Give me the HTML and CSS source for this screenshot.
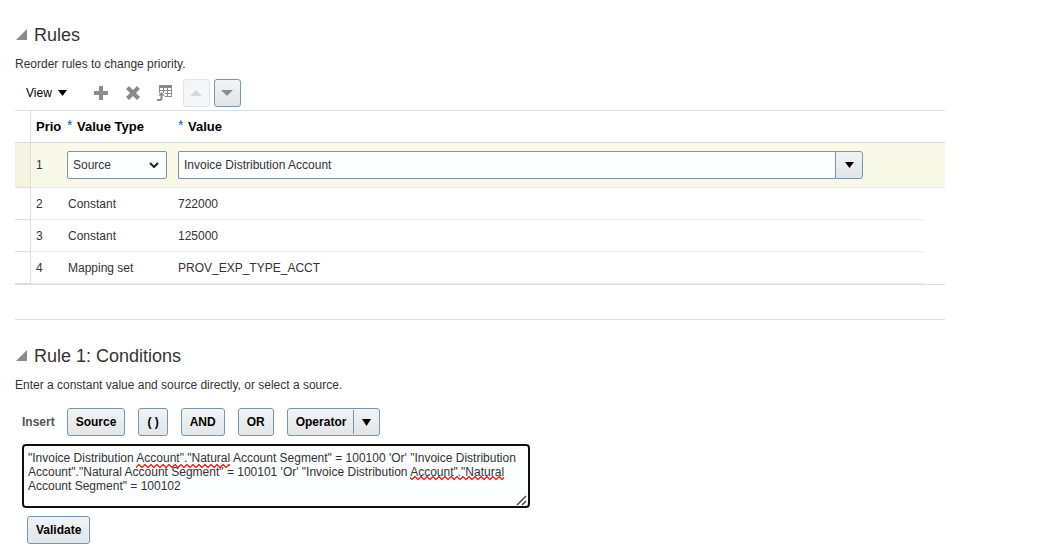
FILE: index.html
```html
<!DOCTYPE html>
<html lang="en">
<head>
    <meta charset="UTF-8">
    <meta name="viewport" content="width=device-width, initial-scale=1.0">
    <title>Account Rule</title>
    <link rel="stylesheet" href="styles.css">
</head>
<body>
    <section class="panel rules">
        <h2 class="panel-title">
            <svg class="disclosure" width="12" height="12" viewBox="0 0 12 12"><path d="M12 0V11H1Z"/></svg>
            Rules
        </h2>
        <p class="hint">Reorder rules to change priority.</p>
        <div class="toolbar">
            <button type="button" class="view-menu">View
                <svg width="9" height="6" viewBox="0 0 9 6"><path d="M0 0H9L4.500 6Z"/></svg>
            </button>
            <button type="button" class="tool" aria-label="Add">
                <svg width="14" height="14" viewBox="0 0 14 14"><path d="M5 0H9V5H14V9H9V14H5V9H0V5H5Z"/></svg>
            </button>
            <button type="button" class="tool" aria-label="Delete">
                <svg width="14" height="14" viewBox="0 0 14 14"><path d="M3 0L7 4L11 0L14 3L10 7L14 11L11 14L7 10L3 14L0 11L4 7L0 3Z"/></svg>
            </button>
            <button type="button" class="tool" aria-label="Detach">
                <svg width="16" height="16" viewBox="0 0 16 16">
                    <path d="M2 0H15V12H8V11H14V9H11V11H10V9H8V8H10V6H7V8H6V6H3V8H2ZM3 3V5H6V3ZM7 3V5H10V3ZM11 3V5H14V3ZM11 6V8H14V6Z" fill-rule="evenodd"/>
                    <path d="M4.500 7L8 10.500H5.500V13Q5.500 16 3 16H0V14H2.500Q3.500 14 3.500 13V10.500H1Z"/>
                </svg>
            </button>
            <button type="button" class="btn move" aria-label="Move up" disabled>
                <svg width="12" height="6" viewBox="0 0 12 6"><path d="M0 6H12L6 0Z"/></svg>
            </button>
            <button type="button" class="btn move" aria-label="Move down">
                <svg width="12" height="6" viewBox="0 0 12 6"><path d="M0 0H12L6 6Z"/></svg>
            </button>
        </div>
        <table class="rule-table">
            <colgroup>
                <col class="col-handle">
                <col class="col-priority">
                <col class="col-type">
                <col>
                <col class="col-scroll">
            </colgroup>
            <thead>
                <tr>
                    <th class="handle"></th>
                    <th class="priority">Prio</th>
                    <th><span class="required">*</span>Value Type</th>
                    <th><span class="required">*</span>Value</th>
                    <th></th>
                </tr>
            </thead>
            <tbody>
                <tr class="selected">
                    <td class="handle"></td>
                    <td class="priority">1</td>
                    <td>
                        <div class="type-box">
                            <select class="type-select" aria-label="Value Type">
                                <option>Source</option>
                                <option>Constant</option>
                                <option>Mapping set</option>
                            </select>
                            <svg class="chevron" width="10" height="6" viewBox="0 0 10 6"><path d="M1 1L5 5L9 1"/></svg>
                        </div>
                    </td>
                    <td>
                        <div class="combo">
                            <input type="text" aria-label="Value" value="Invoice Distribution Account">
                            <button type="button" aria-label="Show values">
                                <svg width="9" height="6" viewBox="0 0 9 6"><path d="M0 0H9L4.500 6Z"/></svg>
                            </button>
                        </div>
                    </td>
                    <td class="scroll"></td>
                </tr>
                <tr>
                    <td class="handle"></td>
                    <td class="priority">2</td>
                    <td class="type">Constant</td>
                    <td>722000</td>
                    <td class="scroll"></td>
                </tr>
                <tr>
                    <td class="handle"></td>
                    <td class="priority">3</td>
                    <td class="type">Constant</td>
                    <td>125000</td>
                    <td class="scroll"></td>
                </tr>
                <tr>
                    <td class="handle"></td>
                    <td class="priority">4</td>
                    <td class="type">Mapping set</td>
                    <td>PROV_EXP_TYPE_ACCT</td>
                    <td class="scroll"></td>
                </tr>
            </tbody>
        </table>
    </section>

    <section class="panel conditions">
        <h2 class="panel-title">
            <svg class="disclosure" width="12" height="12" viewBox="0 0 12 12"><path d="M12 0V11H1Z"/></svg>
            Rule 1: Conditions
        </h2>
        <p class="hint">Enter a constant value and source directly, or select a source.</p>
        <div class="insert-bar">
            <span class="insert-label">Insert</span>
            <button type="button" class="btn">Source</button>
            <button type="button" class="btn">( )</button>
            <button type="button" class="btn">AND</button>
            <button type="button" class="btn">OR</button>
            <button type="button" class="btn split">
                <span class="split-text">Operator</span>
                <svg width="9" height="7" viewBox="0 0 9 7"><path d="M0 0H9L4.500 7Z"/></svg>
            </button>
        </div>
        <div class="editor">
            <textarea aria-label="Condition" spellcheck="true">"Invoice Distribution Account"."Natural Account Segment" = 100100 'Or' "Invoice Distribution Account"."Natural Account Segment" = 100101 'Or' "Invoice Distribution Account"."Natural Account Segment" = 100102</textarea>
            <!-- spelling marks and resize grip -->
            <svg class="marks" width="508" height="64" viewBox="0 0 508 64">
                <defs>
                    <pattern id="wave" y="20" width="6" height="4" patternUnits="userSpaceOnUse">
                        <path class="wave" d="M-1 2.500L0 3.500L3 0.500L6 3.500L7 2.500"/>
                    </pattern>
                </defs>
                <rect x="114" y="20" width="94" height="4" fill="url(#wave)"/>
                <rect x="388" y="32" width="94" height="4" fill="url(#wave)"/>
                <path class="grip" d="M495 61L504 52M500 61L504 57"/>
            </svg>
        </div>
        <button type="button" class="btn validate">Validate</button>
    </section>
</body>
</html>
```
FILE: styles.css
```css
body {
    margin: 0;
    padding: 24px 108px 14px 15px;
    background: #fff;
    color: #333;
    font-family: "Liberation Sans", Arial, sans-serif;
    font-size: 12px;
    line-height: 14px;
}
button, input, select, textarea {
    font: inherit;
    color: inherit;
    box-sizing: border-box;
    margin: 0;
}
button {
    cursor: pointer;
}
svg {
    display: block;
    flex: none;
}
.panel-title {
    display: flex;
    align-items: center;
    gap: 7px;
    margin: 0;
    font-size: 18px;
    font-weight: normal;
    line-height: 22px;
}
.disclosure {
    fill: #878c91;
}
.hint {
    margin: 11px 0 8px;
}

/* buttons */
.btn {
    display: flex;
    align-items: center;
    justify-content: center;
    height: 28px;
    padding: 0 8px;
    border: 1px solid #7a94aa;
    border-radius: 3px;
    background: linear-gradient(#f1f3f4, #e2e6e9);
    color: #000;
    font-weight: bold;
}
.move {
    width: 27px;
    padding: 0;
    fill: #878c91;
}
.move:disabled {
    border-color: #dfe4e7;
    background: #f4f6f7;
    fill: #d5d8da;
}

/* toolbar */
.toolbar {
    display: flex;
    align-items: center;
    gap: 4px;
    padding-left: 11px;
}
.view-menu {
    display: flex;
    align-items: center;
    gap: 6px;
    margin-right: 16px;
    padding: 0;
    border: none;
    background: none;
    color: #000;
}
.tool {
    display: flex;
    align-items: center;
    justify-content: center;
    width: 28px;
    height: 28px;
    padding: 0;
    border: none;
    background: none;
    fill: #878c91;
}

/* rules table */
.rule-table {
    width: 100%;
    margin-top: 3px;
    border-top: 1px solid #d6dfe6;
    border-bottom: 1px solid #d6dfe6;
    border-collapse: separate;
    border-spacing: 0;
    table-layout: fixed;
}
.col-handle {
    width: 16px;
}
.col-priority {
    width: 31px;
}
.col-type {
    width: 111px;
}
.col-scroll {
    width: 21px;
}
.rule-table th,
.rule-table td {
    box-sizing: border-box;
    height: 32px;
    padding: 0 5px;
    border-bottom: 1px solid #ebedee;
    text-align: left;
    white-space: nowrap;
}
.rule-table th {
    border-color: #d6dfe6;
    color: #000;
    font-size: 13px;
}
.rule-table .type {
    padding-left: 6px;
}
.rule-table .priority {
    padding-right: 0;
}
.rule-table .handle {
    padding: 0;
    border-right: 1px solid #d6dfe6;
    border-bottom-color: #d6dfe6;
}
.rule-table .scroll {
    padding: 0;
    border-bottom-color: transparent;
}
.rule-table .selected td {
    height: 45px;
    background: #f9f9e8;
    border-bottom-color: #ebedee;
}
.rule-table .selected .handle {
    background: #f4f3dc;
    border-bottom-color: #d6dfe6;
}
.required {
    display: inline-block;
    width: 10px;
    color: #0464a8;
    font-size: 14px;
    font-weight: normal;
    line-height: 10px;
    vertical-align: top;
}
.type-box {
    position: relative;
    width: 100px;
}
.type-select {
    appearance: none;
    display: block;
    width: 100%;
    height: 28px;
    padding: 0 5px;
    border: 1px solid #7a94aa;
    border-radius: 2px;
    background: #fcfdfe;
}
.chevron {
    position: absolute;
    top: 11px;
    right: 8px;
    fill: none;
    stroke: #222;
    stroke-width: 2;
    pointer-events: none;
}
.combo {
    display: flex;
    height: 28px;
    margin-right: 56px;
}
.combo input {
    flex: 1;
    min-width: 0;
    padding: 0 5px;
    border: 1px solid #7a94aa;
    border-right: none;
    border-radius: 2px 0 0 2px;
    background: #fcfdfe;
}
.combo button {
    display: flex;
    align-items: center;
    justify-content: center;
    width: 28px;
    padding: 0;
    border: 1px solid #7a94aa;
    border-radius: 0 3px 3px 0;
    background: linear-gradient(#f1f3f4, #e2e6e9);
}

/* conditions */
.conditions {
    margin-top: 34px;
    padding-top: 25px;
    border-top: 1px solid #d6dfe6;
}
.insert-bar {
    display: flex;
    align-items: center;
    gap: 13px;
    margin: 16px 0 8px 7px;
}
.insert-label {
    margin-right: -1px;
    color: #555;
    font-weight: bold;
}
.split-text {
    margin-right: 8px;
    padding: 5px 7px 5px 0;
    border-right: 1px solid #7a94aa;
}
.editor {
    position: relative;
    width: 508px;
    max-width: 100%;
    margin-left: 7px;
}
.editor textarea {
    display: block;
    width: 100%;
    height: 64px;
    padding: 5px 4px;
    border: 2px solid #101010;
    border-radius: 4px;
    outline: none;
    background: #fcfdfe;
    overflow: auto;
    resize: none;
}
.marks {
    position: absolute;
    top: 0;
    left: 0;
    pointer-events: none;
}
.wave {
    fill: none;
    stroke: #f00;
    stroke-width: 1.2;
}
.grip {
    fill: none;
    stroke: #444;
    stroke-width: 1.5;
}
.validate {
    margin: 8px 0 0 12px;
}
```
